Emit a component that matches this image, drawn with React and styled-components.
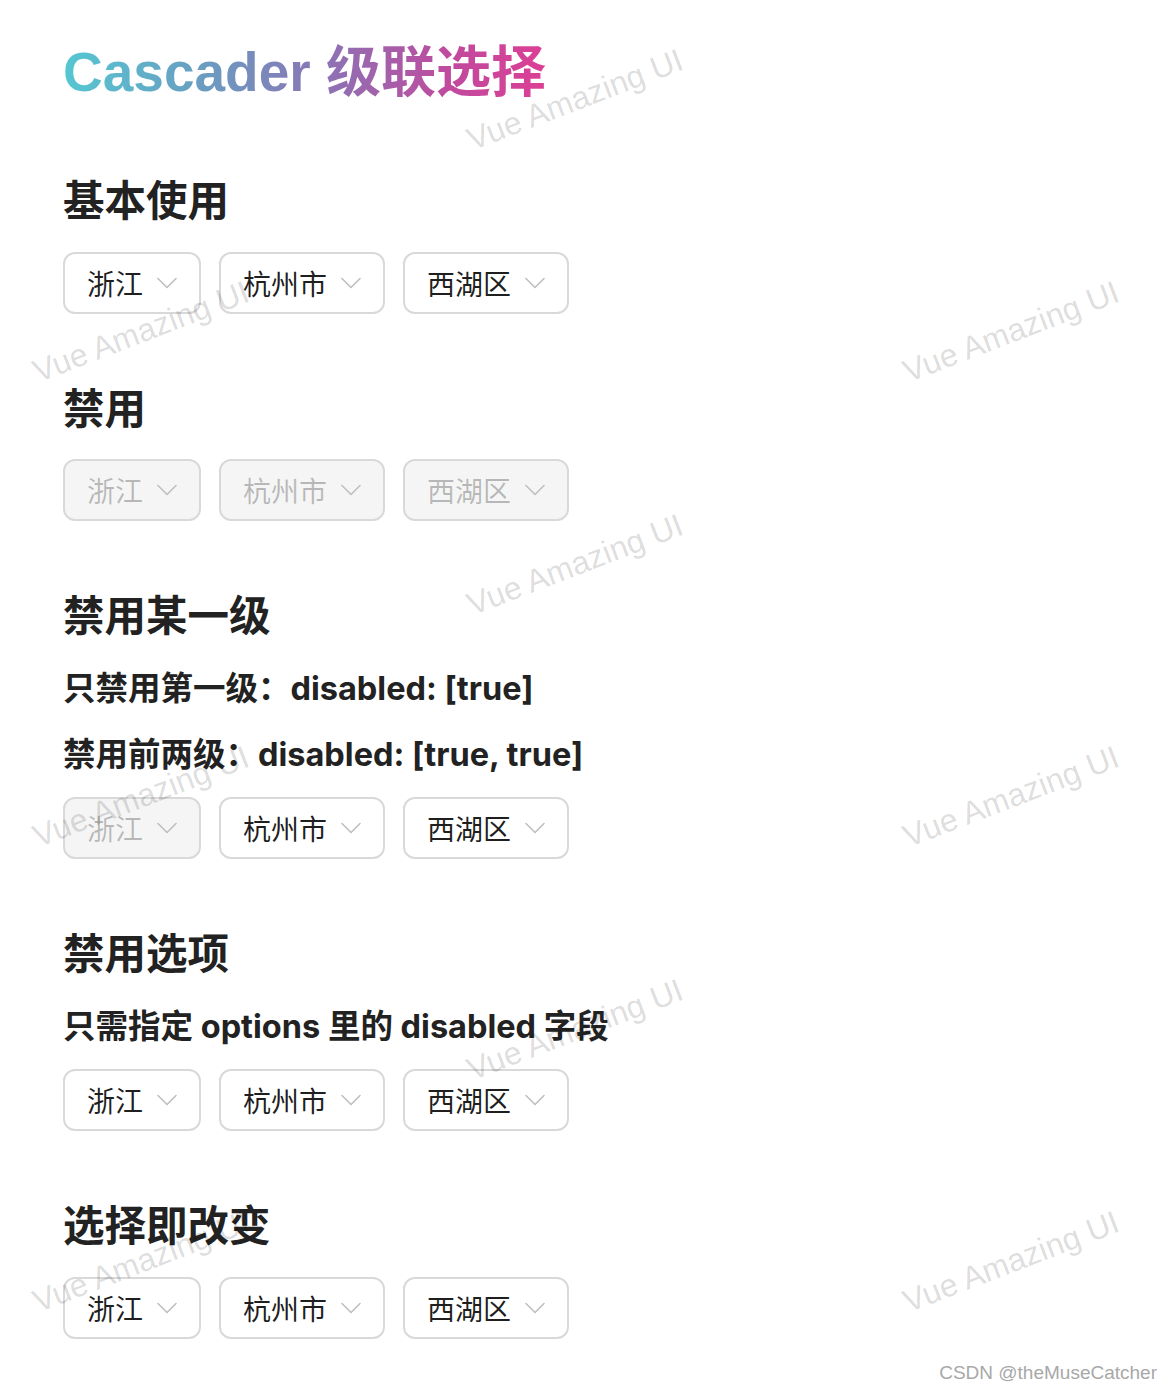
import React from "react";
import styled, { createGlobalStyle } from "styled-components";

const Global = createGlobalStyle`
  html, body { margin: 0; padding: 0; background: #fff; }
  body { font-family: "Inter", "Noto Sans CJK SC", sans-serif; color: rgba(0,0,0,0.88); }
`;

const Page = styled.div`
  position: relative;
  min-height: 1390px;
  box-sizing: border-box;
  padding: 32px 63px 40px;
  overflow: hidden;
  display: flex;
  flex-direction: column;
`;

const Title = styled.h1`
  margin: 0 0 59px;
  font-family: "Liberation Sans", "Noto Sans CJK SC", sans-serif;
  font-size: 55px;
  line-height: 80px;
  font-weight: 700;
  align-self: flex-start;
  background: linear-gradient(90deg, #55c7d2 0%, #6b9bc0 30%, #8d72b4 55%, #c04a9e 80%, #dc3f95 100%);
  -webkit-background-clip: text;
  background-clip: text;
  color: transparent;
`;

const Sections = styled.div`
  display: flex;
  flex-direction: column;
  gap: 65px;
`;

const Section = styled.section`
  display: flex;
  flex-direction: column;
  gap: 20.5px;
`;

const Heading = styled.h2`
  margin: 0;
  font-size: 41.5px;
  line-height: 60px;
  font-weight: 700;
  color: #222;
`;

const Note = styled.p`
  margin: 0;
  font-size: 32.5px;
  line-height: 44px;
  font-weight: 700;
  color: #222;
`;

const Notes = styled.div`
  display: flex;
  flex-direction: column;
  gap: 22px;
`;

const Row = styled.div`
  display: flex;
  gap: 18px;
`;

const Select = styled.div`
  display: inline-flex;
  align-items: center;
  gap: 14px;
  height: 62px;
  box-sizing: border-box;
  padding: 0 22px;
  border: 2px solid #d9d9d9;
  border-radius: 12px;
  font-size: 28px;
  background: ${(p) => (p.$disabled ? "#f5f5f5" : "#fff")};
  color: ${(p) => (p.$disabled ? "rgba(0,0,0,0.25)" : "rgba(0,0,0,0.88)")};
`;

const Arrow = styled.svg`
  width: 20px;
  height: 12px;
  flex: none;
`;

const Overlay = styled.div`
  position: absolute;
  inset: 0;
  pointer-events: none;
  z-index: 10;
`;

const Mark = styled.span`
  position: absolute;
  transform: translate(-50%, -50%) rotate(-21deg);
  font-family: "Liberation Sans", Arial, sans-serif;
  font-size: 32px;
  white-space: nowrap;
  color: rgba(0, 0, 0, 0.15);
`;

const Credit = styled.div`
  position: absolute;
  right: 15px;
  bottom: 6px;
  font-family: "Liberation Sans", Arial, sans-serif;
  font-size: 19px;
  color: #a8a8a8;
  z-index: 11;
`;

const Chevron = () => (
  <Arrow viewBox="0 0 20 12" fill="none">
    <path d="M1 1.5 L10 10.5 L19 1.5" stroke="#bfbfbf" strokeWidth="1.6" strokeLinecap="round" strokeLinejoin="round" />
  </Arrow>
);

const Cascader = ({ disabled = [false, false, false] }) => {
  const labels = ["浙江", "杭州市", "西湖区"];
  return (
    <Row>
      {labels.map((l, i) => (
        <Select key={l} $disabled={disabled[i]}>
          {l}
          <Chevron />
        </Select>
      ))}
    </Row>
  );
};

const marks = [];
for (let k = 0; k < 6; k++) {
  const y = 100 + 232.4 * k;
  const xs = k % 2 === 0 ? [575] : [141, 1011];
  xs.forEach((x) => marks.push({ x, y }));
}

export default function App() {
  return (
    <>
      <Global />
      <Page>
        <Title>Cascader 级联选择</Title>
        <Sections>
          <Section>
            <Heading>基本使用</Heading>
            <Cascader />
          </Section>
          <Section>
            <Heading>禁用</Heading>
            <Cascader disabled={[true, true, true]} />
          </Section>
          <Section>
            <Heading>禁用某一级</Heading>
            <Notes>
              <Note>只禁用第一级：disabled: [true]</Note>
              <Note>禁用前两级：disabled: [true, true]</Note>
            </Notes>
            <Cascader disabled={[true, false, false]} />
          </Section>
          <Section>
            <Heading>禁用选项</Heading>
            <Note>只需指定 options 里的 disabled 字段</Note>
            <Cascader />
          </Section>
          <Section>
            <Heading>选择即改变</Heading>
            <Cascader />
          </Section>
        </Sections>
        <Overlay>
          {marks.map((m, i) => (
            <Mark key={i} style={{ left: m.x, top: m.y }}>Vue Amazing UI</Mark>
          ))}
        </Overlay>
        <Credit>CSDN @theMuseCatcher</Credit>
      </Page>
    </>
  );
}
